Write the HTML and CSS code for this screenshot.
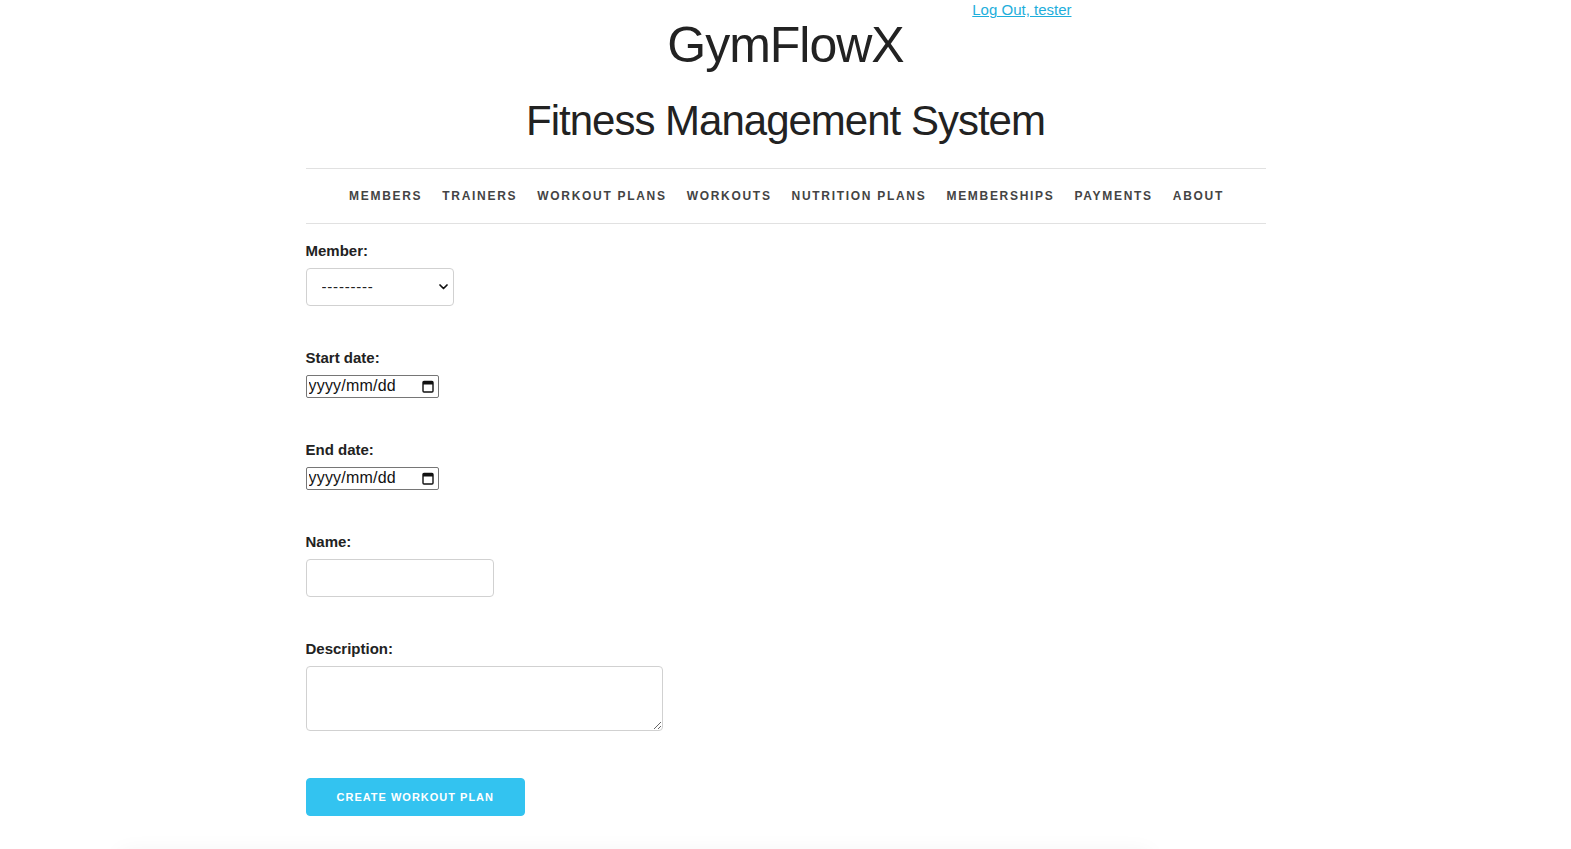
FILE: index.html
```html
<!DOCTYPE html>
<html lang="en">
<head>
  <meta charset="UTF-8">
  <meta name="viewport" content="width=device-width, initial-scale=1.0">
  <title>GymFlowX - New Workout Plan</title>
  <link rel="stylesheet" href="styles.css">
</head>
<body>
  <div class="container">
    <div class="topbar">
      <a href="#" class="logout">Log Out, tester</a>
    </div>
    <h1 class="brand">GymFlowX</h1>
    <h2 class="subtitle">Fitness Management System</h2>

    <nav class="navbar">
      <ul class="navbar-list">
        <li><a class="navbar-link" href="#">Members</a></li>
        <li><a class="navbar-link" href="#">Trainers</a></li>
        <li><a class="navbar-link" href="#">Workout Plans</a></li>
        <li><a class="navbar-link" href="#">Workouts</a></li>
        <li><a class="navbar-link" href="#">Nutrition Plans</a></li>
        <li><a class="navbar-link" href="#">Memberships</a></li>
        <li><a class="navbar-link" href="#">Payments</a></li>
        <li><a class="navbar-link" href="#">About</a></li>
      </ul>
    </nav>

    <form class="plan-form" method="post">
      <p>
        <label for="id_member">Member:</label>
        <span class="select-wrap">
          <select name="member" id="id_member">
            <option value="" selected>---------</option>
          </select>
          <!-- chevron -->
          <svg class="chevron" width="9" height="6" viewBox="0 0 9 6"><path d="M1 1l3.5 3.5L8 1" fill="none" stroke="#111" stroke-width="1.7" stroke-linecap="round" stroke-linejoin="round"/></svg>
        </span>
      </p>
      <p>
        <label for="id_start_date">Start date:</label>
        <span class="date-wrap">
          <input type="text" name="start_date" id="id_start_date" class="date-input" placeholder="yyyy/mm/dd">
          <svg class="cal-icon" width="12" height="13" viewBox="0 0 12 13"><rect x="1" y="1.5" width="10" height="10.5" rx="1" fill="none" stroke="#111" stroke-width="1.4"/><rect x="1" y="1.5" width="10" height="3" fill="#111"/></svg>
        </span>
      </p>
      <p>
        <label for="id_end_date">End date:</label>
        <span class="date-wrap">
          <input type="text" name="end_date" id="id_end_date" class="date-input" placeholder="yyyy/mm/dd">
          <svg class="cal-icon" width="12" height="13" viewBox="0 0 12 13"><rect x="1" y="1.5" width="10" height="10.5" rx="1" fill="none" stroke="#111" stroke-width="1.4"/><rect x="1" y="1.5" width="10" height="3" fill="#111"/></svg>
        </span>
      </p>
      <p>
        <label for="id_name">Name:</label>
        <input type="text" name="name" id="id_name" class="text-input">
      </p>
      <p>
        <label for="id_description">Description:</label>
        <textarea name="description" id="id_description" class="text-area"></textarea>
      </p>
      <button type="submit" class="button-primary">Create Workout Plan</button>
    </form>
  </div>
  <footer class="footer"></footer>
</body>
</html>
```

FILE: styles.css
```css
/* Base */
html, body {
  margin: 0;
  padding: 0;
}
body {
  font-family: "Liberation Sans", Arial, Helvetica, sans-serif;
  font-size: 15px;
  line-height: 1.6;
  color: #222;
  background: #fff;
}
.container {
  max-width: 960px;
  margin: 0 auto;
}

/* Header */
.topbar {
  height: 15px;
  line-height: 20px;
  text-align: right;
  padding-right: 194px;
}
.logout {
  color: #1EAEDB;
}
.brand {
  margin: 0 0 20px;
  font-size: 50px;
  line-height: 1.2;
  font-weight: 400;
  letter-spacing: -1px;
  text-align: center;
}
.subtitle {
  margin: 0 0 20px;
  font-size: 42px;
  line-height: 1.25;
  font-weight: 400;
  letter-spacing: -1px;
  text-align: center;
}

/* Navbar */
.navbar {
  border-top: 1px solid #E1E1E1;
  border-bottom: 1px solid #E1E1E1;
  margin-bottom: 15px;
}
.navbar-list {
  list-style: none;
  margin: 0;
  padding: 0 0 0 2px;
  display: flex;
  justify-content: center;
  gap: 20px;
}
.navbar-link {
  display: block;
  line-height: 54px;
  font-size: 12px;
  font-weight: 700;
  letter-spacing: 1.7px;
  text-transform: uppercase;
  text-decoration: none;
  color: #444;
}

/* Form */
.plan-form p {
  display: flow-root;
  margin: 0 0 25px;
}
.plan-form label {
  display: block;
  font-weight: 700;
  margin-bottom: 5px;
}
.select-wrap,
.date-wrap {
  position: relative;
  display: block;
  width: max-content;
  margin-bottom: 15px;
}
.select-wrap select {
  display: block;
  -webkit-appearance: none;
  appearance: none;
  width: 148px;
  height: 38px;
  padding: 0 10px 0 15px;
  border: 1px solid #D1D1D1;
  border-radius: 4px;
  background: #fff;
  font-family: inherit;
  font-size: 15px;
  letter-spacing: 0.8px;
  color: #222;
  box-sizing: border-box;
}
.chevron {
  position: absolute;
  right: 6px;
  top: 16px;
  pointer-events: none;
}
.date-input {
  display: block;
  width: 133px;
  height: 23px;
  padding: 0 2px;
  border: 1px solid #767676;
  border-radius: 2px;
  font-family: inherit;
  font-size: 16px;
  line-height: 21px;
  letter-spacing: 0.2px;
  color: #111;
  box-sizing: border-box;
}
.date-input::placeholder {
  color: #111;
}
.cal-icon {
  position: absolute;
  right: 5px;
  top: 5px;
  pointer-events: none;
}
.text-input,
.text-area {
  display: block;
  height: 38px;
  padding: 6px 10px;
  border: 1px solid #D1D1D1;
  border-radius: 4px;
  box-sizing: border-box;
  font-family: inherit;
  font-size: 15px;
  margin: 0 0 15px;
}
.text-input {
  width: 188px;
}
.text-area {
  width: 357px;
  height: 65px;
  min-height: 65px;
  margin-bottom: 22px;
}

/* Button */
.button-primary {
  display: block;
  height: 38px;
  padding: 0 30px;
  margin: 0 0 15px;
  border: 1px solid #33C3F0;
  border-radius: 4px;
  background-color: #33C3F0;
  color: #fff;
  font-family: inherit;
  font-size: 11px;
  font-weight: 700;
  line-height: 36px;
  letter-spacing: 1px;
  text-transform: uppercase;
  cursor: pointer;
  box-sizing: border-box;
}
.button-primary:hover {
  background-color: #1EAEDB;
  border-color: #1EAEDB;
}

/* Footer */
.footer {
  margin: 36px 0 0 120px;
  width: 1030px;
  height: 40px;
  box-shadow: 0 0 22px rgba(0, 0, 0, 0.05);
}
```
